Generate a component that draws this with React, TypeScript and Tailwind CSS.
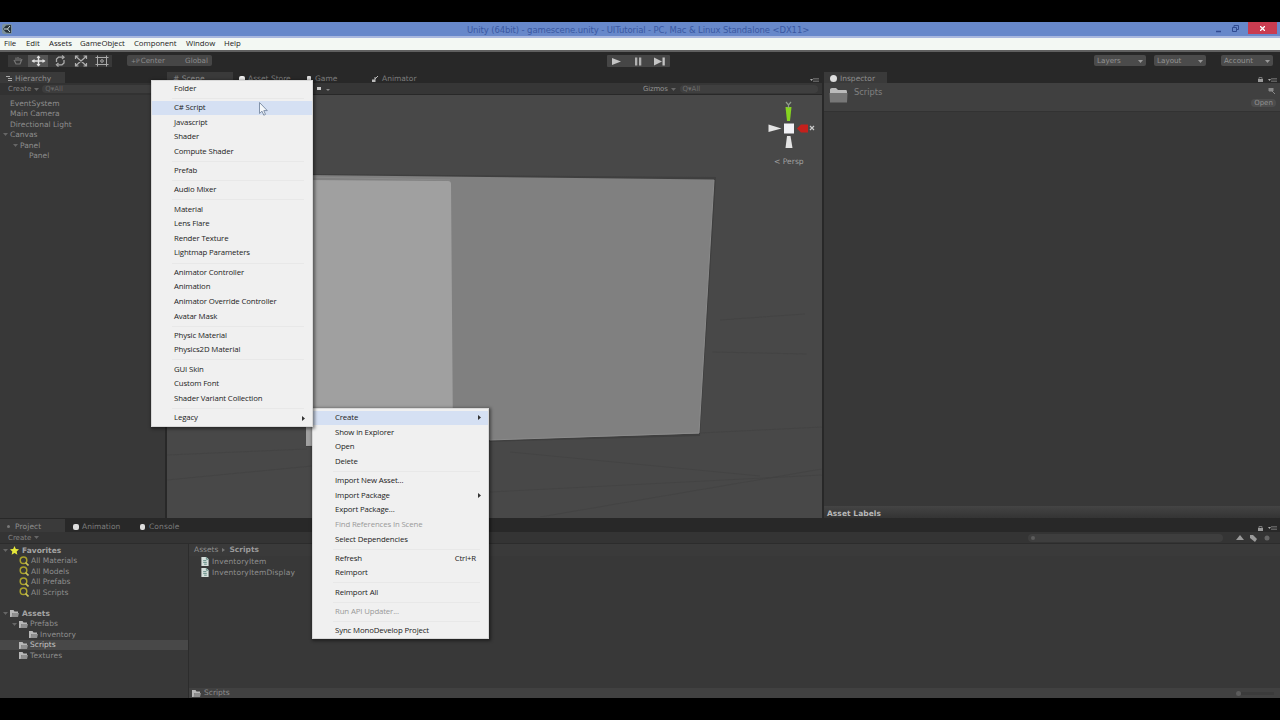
import type { ReactNode } from 'react'
import { clsx } from 'clsx'

interface MenuEntry {
  label: string
  shortcut?: string
  submenu?: boolean
  disabled?: boolean
  active?: boolean
}

const CREATE_MENU: MenuEntry[][] = [
  [{ label: 'Folder' }],
  [
    { label: 'C# Script', active: true },
    { label: 'Javascript' },
    { label: 'Shader' },
    { label: 'Compute Shader' },
  ],
  [{ label: 'Prefab' }],
  [{ label: 'Audio Mixer' }],
  [
    { label: 'Material' },
    { label: 'Lens Flare' },
    { label: 'Render Texture' },
    { label: 'Lightmap Parameters' },
  ],
  [
    { label: 'Animator Controller' },
    { label: 'Animation' },
    { label: 'Animator Override Controller' },
    { label: 'Avatar Mask' },
  ],
  [{ label: 'Physic Material' }, { label: 'Physics2D Material' }],
  [
    { label: 'GUI Skin' },
    { label: 'Custom Font' },
    { label: 'Shader Variant Collection' },
  ],
  [{ label: 'Legacy', submenu: true }],
]

const ASSET_MENU: MenuEntry[][] = [
  [
    { label: 'Create', submenu: true, active: true },
    { label: 'Show in Explorer' },
    { label: 'Open' },
    { label: 'Delete' },
  ],
  [
    { label: 'Import New Asset...' },
    { label: 'Import Package', submenu: true },
    { label: 'Export Package...' },
    { label: 'Find References In Scene', disabled: true },
    { label: 'Select Dependencies' },
  ],
  [{ label: 'Refresh', shortcut: 'Ctrl+R' }, { label: 'Reimport' }],
  [{ label: 'Reimport All' }],
  [{ label: 'Run API Updater...', disabled: true }],
  [{ label: 'Sync MonoDevelop Project' }],
]

function ContextMenu({ groups, className }: { groups: MenuEntry[][]; className: string }) {
  return (
    <div
      className={clsx(
        "absolute border border-[#d8d8d8] bg-[#f0f0f0] font-['Open_Sans',sans-serif] text-[7.8px] tracking-[-0.13px] text-[#222] shadow-[1px_1px_3px_1px_rgba(0,0,0,0.45)]",
        className,
      )}
    >
      {groups.map((group, i) => (
        <div key={i}>
          {i > 0 && (
            <div className="flex h-[4.7px] items-center pr-2 pl-[20px]">
              <div className="h-px w-full bg-[#e8e8e8]" />
            </div>
          )}
          {group.map((entry) => (
            <div
              key={entry.label}
              className={clsx(
                'flex h-[14.6px] items-center pr-[7px] pl-[22px] leading-none whitespace-nowrap',
                entry.active && 'bg-[#d5e0f3]',
                entry.disabled && 'text-[#999]',
              )}
            >
              <span>{entry.label}</span>
              {entry.shortcut && <span className="mr-[5px] ml-auto">{entry.shortcut}</span>}
              {entry.submenu && (
                <svg className="ml-auto h-[5px] w-[3px]" viewBox="0 0 3 5">
                  <path d="M0 0l3 2.5L0 5z" fill="#333" />
                </svg>
              )}
            </div>
          ))}
        </div>
      ))}
    </div>
  )
}

function Caret({ className = 'text-[#888]' }: { className?: string }) {
  return (
    <svg className={clsx('h-[3px] w-[5px] shrink-0', className)} viewBox="0 0 5 3">
      <path d="M0 0h5L2.500 3z" fill="currentColor" />
    </svg>
  )
}

function FolderIcon() {
  return (
    <svg className="h-[7px] w-[9px] shrink-0" viewBox="0 0 9 7">
      <path d="M0 0h3.500l1 1.500H8V3H2.500L2 7H0z" fill="#b8b8b8" />
      <path d="M2.500 3H9L8 7H1.500z" fill="#8f8f8f" />
    </svg>
  )
}

function SearchIcon() {
  return (
    <svg className="h-[10px] w-[10px] shrink-0" viewBox="0 0 10 10" fill="none">
      <circle cx="4.500" cy="4.300" r="3.300" stroke="#aaa32c" strokeWidth="1.500" />
      <path d="M6.500 6.500L9.500 9.500" stroke="#c9c15a" strokeWidth="1.700" />
    </svg>
  )
}

function StarIcon() {
  return (
    <svg className="h-[9px] w-[9px] shrink-0" viewBox="0 0 10 10">
      <path d="M5 0l1.500 3.200 3.500.4-2.600 2.400.8 3.600L5 7.800 1.800 9.600l.8-3.600L0 3.600l3.500-.4z" fill="#e6e83a" />
    </svg>
  )
}

function ScriptIcon() {
  return (
    <svg className="h-[9px] w-[8px] shrink-0" viewBox="0 0 8 10">
      <path d="M0 0h5.500L8 2.500V10H0z" fill="#d5dfdc" />
      <path d="M5.500 0v2.500H8M2 4h3.500M2 6h4M3 8h3" stroke="#5d8880" fill="none" />
    </svg>
  )
}

function TitleBar() {
  return (
    <div className="flex h-4 shrink-0 items-start border-b-2 border-[#a9b8de] bg-[#6788ca]">
      <svg className="mt-[2px] ml-[2px] h-[10px] w-[10px]" viewBox="0 0 10 10">
        <rect width="10" height="10" rx="2" fill="#7b919c" />
        <path d="M1 5l3-3.500L9 1v8L4 8.500z" fill="#273238" />
        <path d="M2 5h3.500M5.500 5L8 2M5.500 5L8 8" stroke="#d9e6e6" />
      </svg>
      <div className="ml-[455px] w-[484px] pt-px text-[8.500px] leading-[14px] whitespace-pre text-[#3a58a2]">
        <span className="tracking-[-0.12px]">Unity (64bit) - gamescene.unity - UITutorial - PC, Mac &amp; Linux Standalone &lt;DX11&gt;</span>
      </div>
      <svg className="mt-[2px] ml-auto h-[9px] w-[26px]" viewBox="0 0 26 9" fill="none" stroke="#304b91">
        <path d="M0 7.500h5" strokeWidth="1.500" />
        <path d="M16.500 3.500h4v4h-4zM18 3V1.500h4.500v4H21" />
      </svg>
      <div className="ml-[6px] flex h-3 w-[29px] items-center justify-center bg-[#c93c50]">
        <svg className="h-[5px] w-[5px]" viewBox="0 0 5 5">
          <path d="M0 0l5 5M5 0L0 5" stroke="#fff" strokeWidth="1.300" />
        </svg>
      </div>
      <div className="w-[3px]" />
    </div>
  )
}

const MENU_BAR = [
  { label: 'File', width: 'w-[22px]' },
  { label: 'Edit', width: 'w-[23px]' },
  { label: 'Assets', width: 'w-[31px]' },
  { label: 'GameObject', width: 'w-[54px]' },
  { label: 'Component', width: 'w-[52px]' },
  { label: 'Window', width: 'w-[38px]' },
  { label: 'Help', width: 'w-[30px]' },
]

function MenuBar() {
  return (
    <div className="flex h-[14px] shrink-0 items-center border-b-2 border-[#606060] bg-[#f3f8f3] pl-1 font-['Open_Sans',sans-serif] text-[7.8px] leading-none tracking-[-0.05px] text-[#222]">
      {MENU_BAR.map((item) => (
        <span key={item.label} className={item.width}>
          {item.label}
        </span>
      ))}
    </div>
  )
}

function ToolbarDropdown({ label, className }: { label: string; className?: string }) {
  return (
    <div
      className={clsx(
        'flex h-[11px] w-[52px] items-center justify-between rounded-[2px] bg-[#4b4b4b] px-[3px] pt-px leading-none text-[#939393]',
        className,
      )}
    >
      {label}
      <Caret className="text-[#999]" />
    </div>
  )
}

function Toolbar() {
  return (
    <div className="flex h-5 shrink-0 items-start bg-[#282828] pt-[3px] pr-[7px] pl-2 text-[7.2px]">
      <div className="flex h-3 bg-[#393939]">
        <svg className="h-3 w-5" viewBox="0 0 20 12" fill="none" stroke="#777">
          <path d="M6 5l2 4h4l2-5M8 6V2.500M10 6V2M12 6V3" strokeWidth="1.200" />
        </svg>
        <svg className="h-3 w-5 bg-[#555]" viewBox="0 0 20 12">
          <path d="M4.500 6h12M10.500 1v10" stroke="#e2e2e2" strokeWidth="1.500" />
          <path d="M8.500 3l2-2.500 2 2.500zM8.500 9l2 2.500 2-2.500zM6.500 4v4l-3-2zM14.500 4v4l3-2z" fill="#e2e2e2" />
        </svg>
        <svg className="h-3 w-[22px]" viewBox="0 0 22 12" fill="none" stroke="#aaa" strokeWidth="1.300">
          <path d="M8.500 7V4l2-1.800H15M16 5v3l-2 1.800H9.500" />
          <path d="M14 .5l2 1.700-2 1.800M10.500 8l-2 1.800 2 1.700" />
        </svg>
        <svg className="h-3 w-[21px]" viewBox="0 0 21 12" fill="none" stroke="#b0b0b0" strokeWidth="1.200">
          <path d="M6 1.500l10 9M16 1.500l-10 9M5.500 4V1h3M13.500 1h3v3M5.500 8v3h3M13.500 11h3V8" />
        </svg>
        <svg className="h-3 w-[21px]" viewBox="0 0 21 12" fill="none" stroke="#aaa">
          <path d="M6.500 .5v11M15.500 .5v11M4.500 2.500h13M4.500 9.500h13" />
          <circle cx="11" cy="6" r="1.300" />
        </svg>
      </div>
      <div className="ml-[15px] flex h-[11px] w-[85px] items-center rounded-[2px] bg-[#464646] px-1 pt-px leading-none text-[#8c8c8c]">
        <span className="text-[6px]">+P</span>
        <span className="ml-px">Center</span>
        <span className="ml-auto">Global</span>
      </div>
      <div className="ml-[395px] flex h-3 w-[63px] items-center justify-between rounded-[1px] bg-[#464646] px-[4px]">
        <svg className="h-[9px] w-[11px]" viewBox="0 0 11 9">
          <path d="M1 1l9 3.500L1 8z" fill="#c4c4c4" />
        </svg>
        <svg className="h-[9px] w-[7px]" viewBox="0 0 7 9">
          <path d="M0 .5h2.300v8H0zM4 .5h2.300v8H4z" fill="#b0b0b0" />
        </svg>
        <svg className="h-[9px] w-[12px]" viewBox="0 0 12 9">
          <path d="M0 .5l8 4-8 4zM8.500 .5h2.300v8H8.500z" fill="#c4c4c4" />
        </svg>
      </div>
      <ToolbarDropdown label="Layers" className="ml-auto" />
      <ToolbarDropdown label="Layout" className="ml-2" />
      <ToolbarDropdown label="Account" className="ml-[15px]" />
    </div>
  )
}

function Tab({ children, active, className }: { children: ReactNode; active?: boolean; className?: string }) {
  return (
    <div
      className={clsx(
        'flex h-full items-center gap-[3px] pt-[2px] leading-none whitespace-nowrap',
        active ? 'bg-[#3a3a3a] text-[#8e8e8e]' : 'text-[#7c7c7c]',
        className,
      )}
    >
      {children}
    </div>
  )
}

function Dot({ className }: { className?: string }) {
  return <div className={clsx('shrink-0', className)} />
}

function PanelMenu() {
  return (
    <svg className="h-[4px] w-[9px] shrink-0" viewBox="0 0 9 4">
      <path d="M0 1h3L1.500 3z" fill="#aaa" />
      <path d="M3 .5h6M3 2h6M3 3.500h6" stroke="#777" strokeWidth=".7" />
    </svg>
  )
}

function LockIcon() {
  return (
    <svg className="h-[5px] w-[5px]" viewBox="0 0 5 5">
      <path d="M0 2h5v3H0z" fill="#999" />
      <path d="M1 2V.5h3V2" stroke="#777" fill="none" />
    </svg>
  )
}

function TreeRow({
  children,
  open,
  className,
}: {
  children: ReactNode
  open?: boolean
  className?: string
}) {
  return (
    <div className={clsx('flex h-[10.55px] items-center leading-none whitespace-nowrap', className)}>
      <span className="flex w-[7px] shrink-0">{open && <Caret className="text-[#666]" />}</span>
      {children}
    </div>
  )
}

function Hierarchy() {
  return (
    <div className="flex w-[165px] shrink-0 flex-col bg-[#383838] text-[#8e8e8e]">
      <div className="h-[11px] bg-[#282828]">
        <Tab active className="w-[65px] pl-[6px]">
          <svg className="h-[5px] w-[6px]" viewBox="0 0 6 5">
            <path d="M0 .5h4M2 2.500h4M2 4.500h4" stroke="#aaa" />
          </svg>
          Hierarchy
        </Tab>
      </div>
      <div className="flex h-3 items-center bg-[#323232] pl-[8px] text-[7px] leading-none text-[#808080]">
        Create
        <Caret className="ml-[3px] text-[#666]" />
        <div className="ml-[3px] flex h-[8px] w-[112px] items-center rounded-sm bg-[#3d3d3d] pl-[3px] text-[#666]">Q▾All</div>
      </div>
      <div className="pt-[3px]">
        <TreeRow className="pl-[3px]">EventSystem</TreeRow>
        <TreeRow className="pl-[3px]">Main Camera</TreeRow>
        <TreeRow className="pl-[3px]">Directional Light</TreeRow>
        <TreeRow className="pl-[3px]" open>Canvas</TreeRow>
        <TreeRow className="pl-[13px]" open>Panel</TreeRow>
        <TreeRow className="pl-[22px]">Panel</TreeRow>
      </div>
    </div>
  )
}

function SceneView() {
  return (
    <div className="flex w-[655px] shrink-0 flex-col bg-[#484848]">
      <div className="flex h-[11px] items-center bg-[#282828] pr-[3px]">
        <Tab active className="w-[66px] pl-[6px]">
          <span># Scene</span>
        </Tab>
        <Tab className="w-[68px] pl-[6px]">
          <Dot className="size-[6px] rounded-[2px] bg-[#eee]" />
          Asset Store
        </Tab>
        <Tab className="w-[67px] pl-[6px]">
          <Dot className="h-[6px] w-[4px] rounded-[1px] bg-[#ddd]" />
          <span className="ml-px">Game</span>
        </Tab>
        <Tab className="pl-[4px]">
          <svg className="h-[6px] w-[6px]" viewBox="0 0 6 6">
            <path d="M0 4h3v2H0zM3 3l3-3M3 1v3" fill="#bbb" stroke="#bbb" />
          </svg>
          <span className="ml-px">Animator</span>
        </Tab>
        <div className="mt-1 ml-auto flex">
          <PanelMenu />
        </div>
      </div>
      <div className="flex h-3 items-center border-b border-[#282828] bg-[#363636] pt-px text-[7px] leading-none">
        <svg className="ml-[150px] h-[5px] w-[14px]" viewBox="0 0 14 5">
          <path d="M0 0h4v3H0z" fill="#ccc" />
          <path d="M9 2h4l-2 2z" fill="#888" />
        </svg>
        <span className="ml-[312px] tracking-[-0.2px] text-[#909090]">Gizmos</span>
        <Caret className="ml-[3px] text-[#666]" />
        <div className="ml-[4px] h-[8px] w-[138px] rounded-sm bg-[#3f3f3f] pl-[3px] leading-[8px] text-[#6c6c6c]">Q▾All</div>
      </div>
      <svg className="h-[422px] w-[655px]" viewBox="167 95 655 422">
        <g stroke="#434343" fill="none" strokeWidth=".8">
          <path d="M700 433l122-6M490 492l332-17M720 320l85-6M712 352l95 2M167 480l145-14M540 517l282-48M167 455l140-6M510 452l250 24" />
        </g>
        <path d="M305 174l411 3-16 259-394 11z" fill="#3f3f3f" />
        <path d="M306 175l408 4.500-15 254L306 446z" fill="#808080" />
        <path d="M306 177L450 180M714 180l-15 253L490 440" stroke="#8a8a8a" fill="none" />
        <path d="M306 180l142 1q3 0 3 3l2 256-147 6z" fill="#a0a0a0" />
        <path d="M785.500 107h6l-1.500 14h-3z" fill="#86d420" />
        <path d="M786 102l2.500 3 2.500-3M788.500 105v3" stroke="#8f9b8b" fill="none" strokeWidth="1.200" />
        <path d="M768.500 124.500v7.500l13-3.500z" fill="#e4e4e4" />
        <path d="M787 136h3.500l2 12h-7z" fill="#e4e4e4" />
        <path d="M797 128.500l4-4h7v8h-7z" fill="#c4201c" />
        <path d="M810 126l4 4M814 126l-4 4" stroke="#ccc" strokeWidth="1.200" />
        <rect x="784" y="123.500" width="10" height="10" fill="#f2f2f6" />
        <text x="774" y="164" fontSize="7.600" fill="#a0a0a0">&lt; Persp</text>
      </svg>
    </div>
  )
}

function Inspector() {
  return (
    <div className="flex min-w-0 flex-1 flex-col bg-[#383838] text-[#888]">
      <div className="flex h-[11px] items-center bg-[#282828] pr-[3px]">
        <Tab active className="w-[63px] pl-[6px]">
          <Dot className="size-[7px] rounded-full bg-[#ddd]" />
          Inspector
        </Tab>
        <div className="mt-1 ml-auto flex items-center gap-[5px]">
          <LockIcon />
          <PanelMenu />
        </div>
      </div>
      <div className="flex h-[29px] items-start border-b border-[#323232] bg-[#404040] pt-[5px] pl-[5px]">
        <svg className="h-[15px] w-[19px]" viewBox="0 0 19 15">
          <path d="M1 1.500Q1 0 3 0h4l2 2h8q1 0 1 2v10H1z" fill="#bbb" />
          <path d="M.5 5h18l-.5 9.500H1z" fill="#777" />
        </svg>
        <span className="mt-[-1px] ml-[6px] text-[8.300px] leading-[10px] text-[#808080]">Scripts</span>
        <div className="mr-[4px] ml-auto flex flex-col items-end gap-[5px]">
          <svg className="h-[6px] w-[8px]" viewBox="0 0 8 6">
            <path d="M1 0h4v3H1zM4 3l3 3" fill="#888" stroke="#888" />
          </svg>
          <div className="flex h-[8px] w-[25px] items-center justify-center rounded-sm bg-[#4d4d4d] text-[7px] leading-none text-[#909090]">Open</div>
        </div>
      </div>
      <div className="flex-1" />
      <div className="flex h-[12px] items-center bg-linear-to-b from-[#444] to-[#343434] pt-[3px] pl-[3px] leading-none font-bold tracking-[0.05px] text-[#b8b8b8]">
        Asset Labels
      </div>
    </div>
  )
}

function Project() {
  return (
    <div className="flex h-[179px] shrink-0 flex-col bg-[#383838] text-[#8e8e8e]">
      <div className="flex h-[13px] items-center bg-[#282828] pr-[3px]">
        <Tab active className="w-[65px] pl-[7px]">
          <Dot className="size-[3px] rounded-full bg-[#777]" />
          <span className="ml-[2px] tracking-[0.1px]">Project</span>
        </Tab>
        <Tab className="w-[69px] pl-[8px]">
          <Dot className="size-[6px] rounded-[2px] bg-[#ddd]" />
          Animation
        </Tab>
        <Tab className="pl-[6px]">
          <Dot className="h-[6px] w-[5px] rounded-[2px] bg-[#ddd]" />
          <span className="ml-px tracking-[0.1px]">Console</span>
        </Tab>
        <div className="mt-[5px] ml-auto flex items-center gap-[5px]">
          <LockIcon />
          <PanelMenu />
        </div>
      </div>
      <div className="flex h-3 items-center border-b border-[#2c2c2c] bg-[#343434] pl-[8px] text-[7px] leading-none text-[#808080]">
        <span className="pt-px">Create</span>
        <Caret className="ml-[3px] text-[#666]" />
        <div className="mr-[13px] ml-auto flex h-[8px] w-[195px] items-center rounded-sm bg-[#3e3e3e] pl-[3px]">
          <div className="size-[4px] rounded-full bg-[#5c5c5c]" />
        </div>
        <svg className="mr-[8px] h-[8px] w-[36px]" viewBox="0 0 36 8">
          <path d="M0 6l4-5 4 5zM14 1h3l4 4-2 3-5-4z" fill="#999" />
          <circle cx="31" cy="4" r="2.500" fill="#666" />
        </svg>
      </div>
      <div className="flex min-h-0 flex-1">
        <div className="w-[189px] shrink-0 border-r border-[#2c2c2c] pt-px">
          <TreeRow className="pl-[3px] font-bold text-[#a4a4a4]" open>
            <StarIcon />
            <span className="ml-[3px]">Favorites</span>
          </TreeRow>
          {['All Materials', 'All Models', 'All Prefabs', 'All Scripts'].map((name) => (
            <TreeRow key={name} className="pl-[12px]">
              <SearchIcon />
              <span className="ml-[2px]">{name}</span>
            </TreeRow>
          ))}
          <div className="h-[10.55px]" />
          <TreeRow className="pl-[3px] font-bold text-[#a4a4a4]" open>
            <FolderIcon />
            <span className="ml-[3px]">Assets</span>
          </TreeRow>
          <TreeRow className="pl-[12px]" open>
            <FolderIcon />
            <span className="ml-[2px]">Prefabs</span>
          </TreeRow>
          <TreeRow className="pl-[22px]">
            <FolderIcon />
            <span className="ml-[2px]">Inventory</span>
          </TreeRow>
          <TreeRow className="bg-[#484848] pl-[12px] text-[#c8c8c8]">
            <FolderIcon />
            <span className="ml-[2px]">Scripts</span>
          </TreeRow>
          <TreeRow className="pl-[12px]">
            <FolderIcon />
            <span className="ml-[2px] tracking-[0.1px]">Textures</span>
          </TreeRow>
        </div>
        <div className="flex min-w-0 flex-1 flex-col">
          <div className="flex h-[12px] items-center gap-[4px] bg-[#3a3a3a] pl-[5px] leading-none">
            <span>Assets</span>
            <svg className="h-[4px] w-[3px]" viewBox="0 0 3 4">
              <path d="M0 0l3 2-3 2z" fill="#777" />
            </svg>
            <span className="font-bold text-[#999]">Scripts</span>
          </div>
          <div className="pt-[0.6px] pl-[5px]">
            <TreeRow>
              <ScriptIcon />
              <span className="ml-[3px] tracking-[0.12px]">InventoryItem</span>
            </TreeRow>
            <TreeRow>
              <ScriptIcon />
              <span className="ml-[3px] tracking-[0.12px]">InventoryItemDisplay</span>
            </TreeRow>
          </div>
          <div className="mt-auto flex h-[10px] items-center gap-[3px] bg-[#414141] pl-[3px] leading-none">
            <FolderIcon />
            Scripts
            <div className="mr-[6px] ml-auto flex h-[3px] w-[38px] items-center bg-[#3b3b3b]">
              <div className="size-[5px] shrink-0 rounded-full bg-[#5c5c5c]" />
            </div>
          </div>
        </div>
      </div>
    </div>
  )
}

function Cursor() {
  return (
    <svg className="absolute top-[102px] left-[259px] h-[14px] w-[9px]" viewBox="0 0 9 14">
      <path d="M.5 .5v11l2.500-2.300 1.800 4 1.700-.8-1.700-3.800h3.500z" fill="#f4f7fa" stroke="#7688a0" strokeWidth=".9" />
    </svg>
  )
}

export default function App() {
  return (
    <div className="relative flex h-[720px] w-[1280px] flex-col overflow-hidden bg-black pt-[22px] font-['DejaVu_Sans',sans-serif] text-[7.5px]">
      <TitleBar />
      <MenuBar />
      <Toolbar />
      <div className="flex h-[446px] shrink-0 gap-[2px] bg-[#282828]">
        <Hierarchy />
        <SceneView />
        <Inspector />
      </div>
      <div className="h-px shrink-0 bg-[#282828]" />
      <Project />
      <ContextMenu groups={ASSET_MENU} className="top-[408px] left-[312px] h-[231px] w-[177px] pt-[1.7px]" />
      <ContextMenu groups={CREATE_MENU} className="top-[80px] left-[151px] h-[347px] w-[162px] pt-[0.4px]" />
      <Cursor />
    </div>
  )
}
